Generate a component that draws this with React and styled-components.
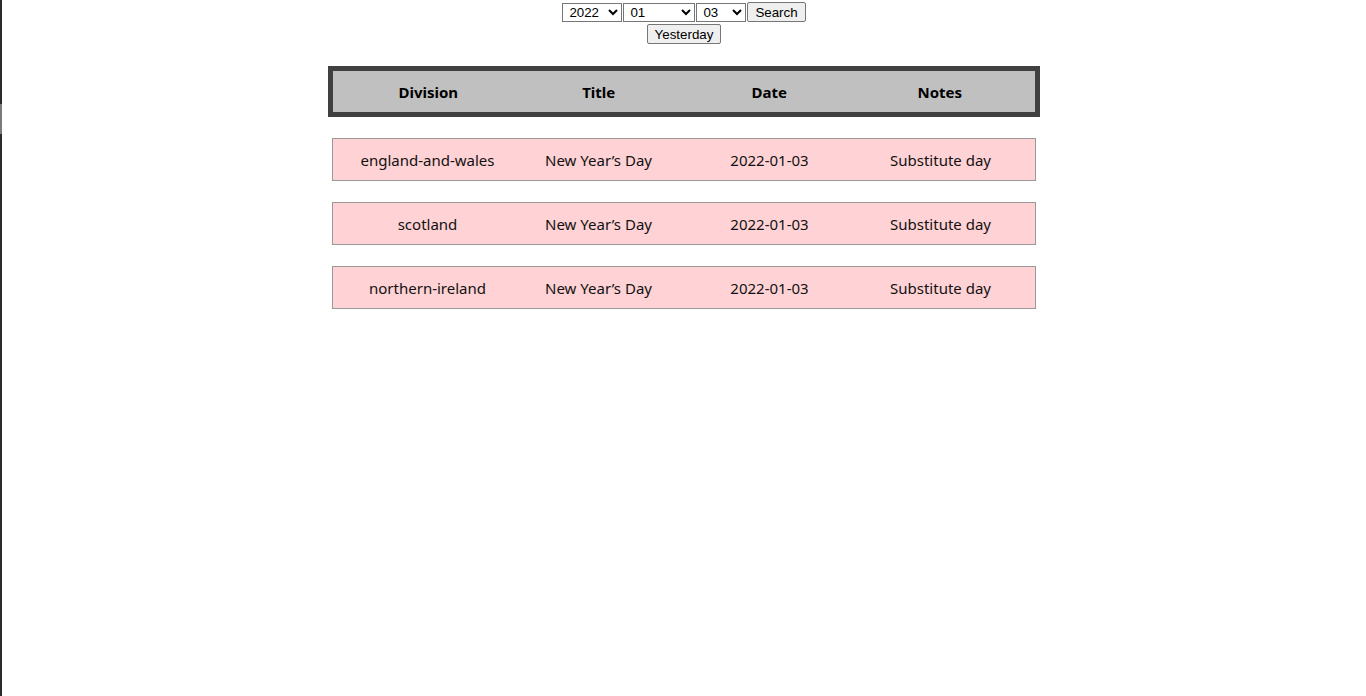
import React from 'react';
import styled, { createGlobalStyle } from 'styled-components';

const GlobalStyle = createGlobalStyle`
  html, body {
    margin: 0;
    padding: 0;
    background: #fff;
  }
  body {
    font-family: "Segoe UI", "Noto Sans", sans-serif;
    min-height: 696px;
    border-left: 2px solid #2b2b2b;
    box-sizing: border-box;
  }
  body::before {
    content: "";
    position: fixed;
    left: 0;
    top: 104px;
    width: 2px;
    height: 30px;
    background: #7a7a7a;
  }
`;

const Page = styled.div`
  display: flex;
  flex-direction: column;
  align-items: center;
  padding-top: 2px;
`;

const Controls = styled.div`
  display: flex;
  gap: 1px;
  align-items: center;
`;

const Select = styled.select`
  font-family: "Liberation Sans", Arial, sans-serif;
  font-size: 13.33px;
  height: 19px;
  width: ${p => p.$w}px;
  border: 1px solid #767676;
  border-radius: 0;
  background: #fff;
  color: #000;
  padding: 0 0 0 2px;
`;

const Button = styled.button`
  font-family: "Liberation Sans", Arial, sans-serif;
  font-size: 13.33px;
  height: 20px;
  padding: 0 7px;
  border: 1px solid #767676;
  border-radius: 2px;
  background: #efefef;
  color: #000;
`;

const SecondRow = styled.div`
  display: flex;
  margin-top: 2px;
`;

const Table = styled.div`
  width: 712px;
  margin-top: 22px;
  display: flex;
  flex-direction: column;
  gap: 21px;
`;

const Header = styled.div`
  display: grid;
  grid-template-columns: repeat(4, 1fr);
  align-items: center;
  height: 51px;
  box-sizing: border-box;
  padding: 0 10px;
  border: 5px solid #404040;
  background: #c0c0c0;
  font-weight: bold;
  font-size: 15px;
  color: #000;
`;

const Row = styled.div`
  display: grid;
  grid-template-columns: repeat(4, 1fr);
  align-items: center;
  height: 43px;
  box-sizing: border-box;
  margin: 0 4px;
  padding: 0 9px;
  border: 1px solid #999;
  background: #ffd2d5;
  font-size: 15px;
  color: #111;
`;

const Cell = styled.div`
  text-align: center;
`;

const rows = [
  { division: 'england-and-wales', title: 'New Year’s Day', date: '2022-01-03', notes: 'Substitute day' },
  { division: 'scotland', title: 'New Year’s Day', date: '2022-01-03', notes: 'Substitute day' },
  { division: 'northern-ireland', title: 'New Year’s Day', date: '2022-01-03', notes: 'Substitute day' },
];

export default function App() {
  return (
    <>
      <GlobalStyle />
      <Page>
        <Controls>
          <Select $w={60} defaultValue="2022">
            <option>2021</option>
            <option>2022</option>
            <option>2023</option>
          </Select>
          <Select $w={72} defaultValue="01">
            <option>01</option>
            <option>02</option>
          </Select>
          <Select $w={50} defaultValue="03">
            <option>01</option>
            <option>02</option>
            <option>03</option>
          </Select>
          <Button>Search</Button>
        </Controls>
        <SecondRow>
          <Button>Yesterday</Button>
        </SecondRow>
        <Table>
          <Header>
            <Cell>Division</Cell>
            <Cell>Title</Cell>
            <Cell>Date</Cell>
            <Cell>Notes</Cell>
          </Header>
          {rows.map(r => (
            <Row key={r.division}>
              <Cell>{r.division}</Cell>
              <Cell>{r.title}</Cell>
              <Cell>{r.date}</Cell>
              <Cell>{r.notes}</Cell>
            </Row>
          ))}
        </Table>
      </Page>
    </>
  );
}
